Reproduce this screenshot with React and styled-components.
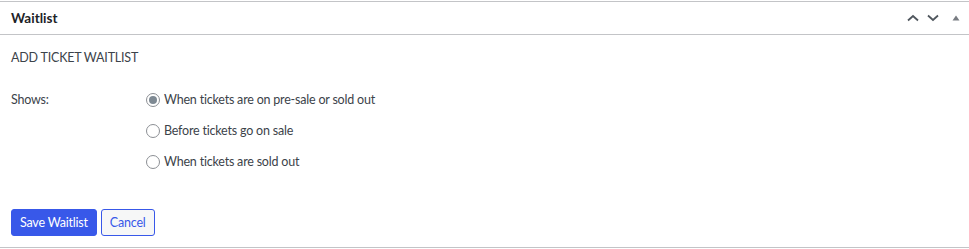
import styled, { createGlobalStyle } from "styled-components";

const GlobalStyle = createGlobalStyle`
    html, body {
        margin: 0;
        padding: 0;
        background: #fff;
    }
    body {
        font-family: Lato, "Noto Sans", sans-serif;
        font-size: 12.5px;
        letter-spacing: -0.2px;
        color: #3c434a;
    }
`;

const Postbox = styled.div`
    margin-top: 1px;
    border-top: 1px solid #c3c4c7;
    border-bottom: 1px solid #c3c4c7;
    background: #fff;
    width: 969px;
    box-sizing: border-box;
`;

const Header = styled.div`
    display: flex;
    align-items: center;
    justify-content: space-between;
    height: 32px;
    border-bottom: 1px solid #c3c4c7;
    padding: 0 0 0 11px;
`;

const Title = styled.h2`
    margin: 0;
    font-size: 13.5px;
    font-weight: 700;
    letter-spacing: 0;
    color: #1d2327;
`;

const Handles = styled.div`
    display: flex;
    align-items: center;
    height: 100%;
`;

const HandleButton = styled.button`
    width: ${(p) => p.$w || 20}px;
    height: 32px;
    padding: 0;
    border: 0;
    background: none;
    display: flex;
    align-items: center;
    justify-content: center;
    cursor: pointer;
`;

const Inside = styled.div`
    padding: 14px 11px 11px 11px;
`;

const Section = styled.div`
    line-height: 18px;
    margin-bottom: 24px;
`;

const FieldRow = styled.div`
    display: flex;
    align-items: flex-start;
`;

const FieldLabel = styled.div`
    width: 135px;
    line-height: 18px;
`;

const Options = styled.div`
    display: flex;
    flex-direction: column;
    gap: 13px;
`;

const Option = styled.label`
    display: flex;
    align-items: center;
    gap: 4px;
    line-height: 18px;
    cursor: pointer;
`;

const Radio = styled.span`
    width: 12px;
    height: 12px;
    border: 1px solid #8c8f94;
    border-radius: 50%;
    display: flex;
    align-items: center;
    justify-content: center;
    background: #fff;
    &::after {
        content: "";
        width: 8px;
        height: 8px;
        border-radius: 50%;
        background: ${(p) => (p.$checked ? "#7e8993" : "transparent")};
    }
`;

const Actions = styled.div`
    display: flex;
    gap: 4px;
    margin-top: 38px;
`;

const Button = styled.button`
    font-family: inherit;
    font-size: 12.5px;
    letter-spacing: -0.2px;
    height: 27px;
    padding: 0 8px;
    border-radius: 3px;
    cursor: pointer;
    border: 1px solid #3858e9;
    background: ${(p) => (p.$primary ? "#3858e9" : "#f6f7f7")};
    color: ${(p) => (p.$primary ? "#fff" : "#3858e9")};
`;

const options = [
    { id: 1, text: "When tickets are on pre-sale or sold out", checked: true },
    { id: 2, text: "Before tickets go on sale" },
    { id: 3, text: "When tickets are sold out" },
];

function App() {
    return (
        <>
            <GlobalStyle />
            <Postbox>
                <Header>
                    <Title>Waitlist</Title>
                    <Handles>
                        <HandleButton aria-label="Move up">
                            <svg width="12" height="8" viewBox="0 0 12 8">
                                <path d="M1 6.5 L6 2 L11 6.5" fill="none" stroke="#50575e" strokeWidth="1.8" />
                            </svg>
                        </HandleButton>
                        <HandleButton aria-label="Move down">
                            <svg width="12" height="8" viewBox="0 0 12 8">
                                <path d="M1 1.5 L6 6 L11 1.5" fill="none" stroke="#50575e" strokeWidth="1.8" />
                            </svg>
                        </HandleButton>
                        <HandleButton $w={26} aria-label="Toggle panel">
                            <svg width="8" height="6" viewBox="0 0 8 6">
                                <path d="M0.5 5.5 L4 0.5 L7.5 5.5 Z" fill="#787c82" />
                            </svg>
                        </HandleButton>
                    </Handles>
                </Header>
                <Inside>
                    <Section>ADD TICKET WAITLIST</Section>
                    <FieldRow>
                        <FieldLabel>Shows:</FieldLabel>
                        <Options>
                            {options.map((o) => (
                                <Option key={o.id}>
                                    <Radio $checked={o.checked} />
                                    <span>{o.text}</span>
                                </Option>
                            ))}
                        </Options>
                    </FieldRow>
                    <Actions>
                        <Button $primary>Save Waitlist</Button>
                        <Button>Cancel</Button>
                    </Actions>
                </Inside>
            </Postbox>
        </>
    );
}

export default App;
